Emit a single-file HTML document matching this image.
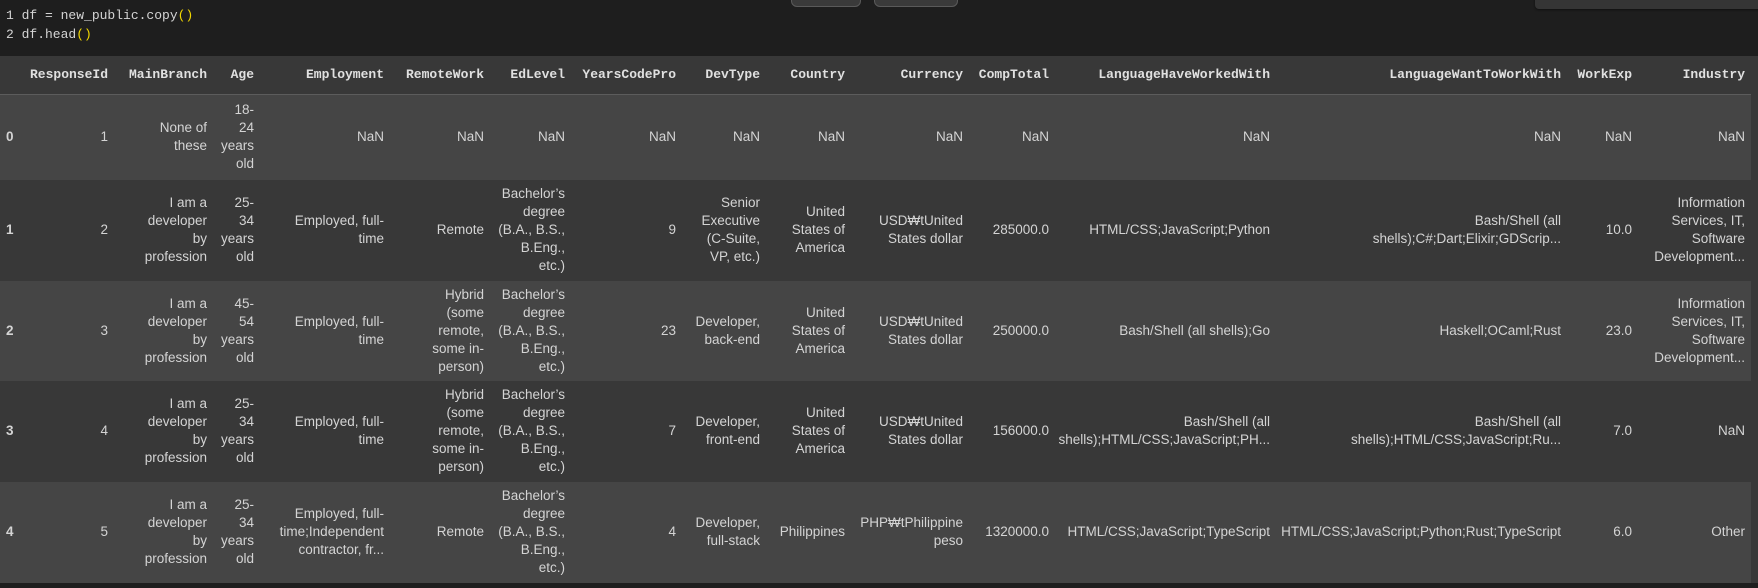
<!DOCTYPE html>
<html><head><meta charset="utf-8"><style>
html,body{margin:0;padding:0;width:1758px;height:588px;overflow:hidden;background:#1e1e1e;}
.code{position:absolute;left:0;top:0;width:1758px;height:56px;background:#1e1e1e;font-family:"Liberation Mono",monospace;font-size:13px;color:#d4d4d4;}
.ln{position:absolute;left:6px;white-space:pre;}
.p{color:#f1d700;}
.btn{position:absolute;top:-10px;height:15px;background:#3a3a3a;border:1px solid #5a5a5a;border-radius:6px;}
.tb{position:absolute;top:-6px;height:15px;background:#353535;border-radius:4px;box-shadow:0 1px 2px #111;}
.out{position:absolute;left:0;top:56px;width:1758px;height:527px;background:#383838;}
table{position:absolute;left:0;top:0;border-collapse:collapse;table-layout:fixed;font-family:"Liberation Sans","Noto Sans CJK KR",sans-serif;font-size:13.5px;color:#d4d4d4;}
td,th{text-align:right;vertical-align:middle;padding:0 6px 0 0;white-space:nowrap;line-height:18px;}
th{font-family:"Liberation Mono",monospace;font-size:13px;font-weight:bold;color:#e0e0e0;height:38px;border-bottom:1px solid #5c5c5c;}
td.i,th.i{text-align:left;padding-left:6px;font-weight:bold;}
tr.a{background:#454545;}
tr.b{background:#383838;}
</style></head><body>
<div class="code">
<div class="ln" style="top:8px">1 df = new_public.copy<span class="p">()</span></div>
<div class="ln" style="top:27px">2 df.head<span class="p">()</span></div>
<div class="btn" style="left:791px;width:68px"></div>
<div class="btn" style="left:874px;width:82px"></div>
<div class="tb" style="left:1535px;width:230px"></div>
</div>
<div class="out">
<table>
<colgroup><col style="width:30px"><col style="width:82px"><col style="width:99px"><col style="width:47px"><col style="width:130px"><col style="width:100px"><col style="width:81px"><col style="width:111px"><col style="width:84px"><col style="width:85px"><col style="width:118px"><col style="width:86px"><col style="width:221px"><col style="width:291px"><col style="width:71px"><col style="width:113px"></colgroup>
<tr class="b"><th class="i"></th><th>ResponseId</th><th>MainBranch</th><th>Age</th><th>Employment</th><th>RemoteWork</th><th>EdLevel</th><th>YearsCodePro</th><th>DevType</th><th>Country</th><th>Currency</th><th>CompTotal</th><th>LanguageHaveWorkedWith</th><th>LanguageWantToWorkWith</th><th>WorkExp</th><th>Industry</th></tr>
<tr class="a" style="height:85px"><td class="i">0</td><td>1</td><td>None of<br>these</td><td>18-<br>24<br>years<br>old</td><td>NaN</td><td>NaN</td><td>NaN</td><td>NaN</td><td>NaN</td><td>NaN</td><td>NaN</td><td>NaN</td><td>NaN</td><td>NaN</td><td>NaN</td><td>NaN</td></tr>
<tr class="b" style="height:101px"><td class="i">1</td><td>2</td><td>I am a<br>developer<br>by<br>profession</td><td>25-<br>34<br>years<br>old</td><td>Employed, full-<br>time</td><td>Remote</td><td>Bachelor’s<br>degree<br>(B.A., B.S.,<br>B.Eng.,<br>etc.)</td><td>9</td><td>Senior<br>Executive<br>(C-Suite,<br>VP, etc.)</td><td>United<br>States of<br>America</td><td>USD₩tUnited<br>States dollar</td><td>285000.0</td><td>HTML/CSS;JavaScript;Python</td><td>Bash/Shell (all<br>shells);C#;Dart;Elixir;GDScrip...</td><td>10.0</td><td>Information<br>Services, IT,<br>Software<br>Development...</td></tr>
<tr class="a" style="height:100px"><td class="i">2</td><td>3</td><td>I am a<br>developer<br>by<br>profession</td><td>45-<br>54<br>years<br>old</td><td>Employed, full-<br>time</td><td>Hybrid<br>(some<br>remote,<br>some in-<br>person)</td><td>Bachelor’s<br>degree<br>(B.A., B.S.,<br>B.Eng.,<br>etc.)</td><td>23</td><td>Developer,<br>back-end</td><td>United<br>States of<br>America</td><td>USD₩tUnited<br>States dollar</td><td>250000.0</td><td>Bash/Shell (all shells);Go</td><td>Haskell;OCaml;Rust</td><td>23.0</td><td>Information<br>Services, IT,<br>Software<br>Development...</td></tr>
<tr class="b" style="height:101px"><td class="i">3</td><td>4</td><td>I am a<br>developer<br>by<br>profession</td><td>25-<br>34<br>years<br>old</td><td>Employed, full-<br>time</td><td>Hybrid<br>(some<br>remote,<br>some in-<br>person)</td><td>Bachelor’s<br>degree<br>(B.A., B.S.,<br>B.Eng.,<br>etc.)</td><td>7</td><td>Developer,<br>front-end</td><td>United<br>States of<br>America</td><td>USD₩tUnited<br>States dollar</td><td>156000.0</td><td>Bash/Shell (all<br>shells);HTML/CSS;JavaScript;PH...</td><td>Bash/Shell (all<br>shells);HTML/CSS;JavaScript;Ru...</td><td>7.0</td><td>NaN</td></tr>
<tr class="a" style="height:101px"><td class="i">4</td><td>5</td><td>I am a<br>developer<br>by<br>profession</td><td>25-<br>34<br>years<br>old</td><td>Employed, full-<br>time;Independent<br>contractor, fr...</td><td>Remote</td><td>Bachelor’s<br>degree<br>(B.A., B.S.,<br>B.Eng.,<br>etc.)</td><td>4</td><td>Developer,<br>full-stack</td><td>Philippines</td><td>PHP₩tPhilippine<br>peso</td><td>1320000.0</td><td>HTML/CSS;JavaScript;TypeScript</td><td>HTML/CSS;JavaScript;Python;Rust;TypeScript</td><td>6.0</td><td>Other</td></tr>
</table>
</div>
</body></html>
